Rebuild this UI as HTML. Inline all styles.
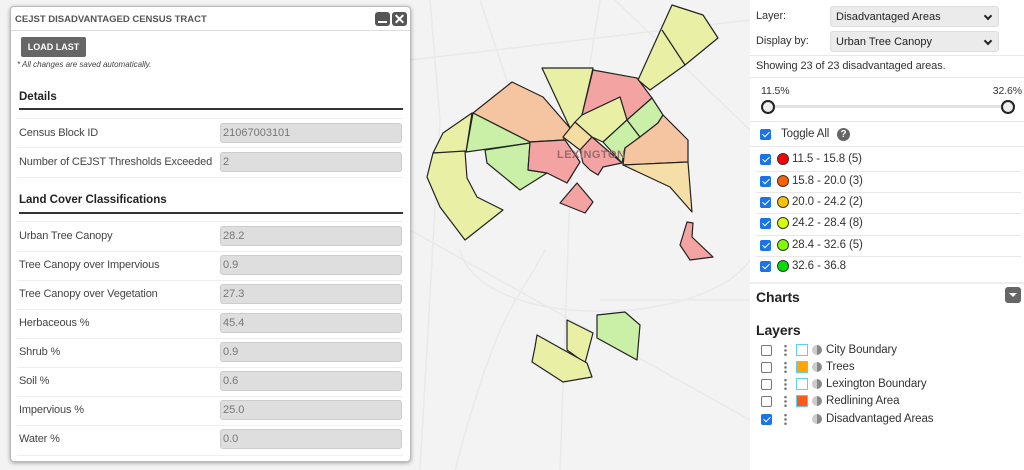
<!DOCTYPE html>
<html><head><meta charset="utf-8"><style>
*{box-sizing:border-box;margin:0;padding:0}
body{width:1024px;height:470px;overflow:hidden;font-family:"Liberation Sans",sans-serif;background:#f3f3f3;position:relative;color:#333}
.a{position:absolute}
#panel{left:10px;top:6px;width:401px;height:456px;background:#fff;border:1px solid #bbb;border-radius:4px;box-shadow:0 1px 4px rgba(0,0,0,.35)}
.lbl{position:absolute;left:8px;font-size:11px;letter-spacing:-0.15px;color:#444}
.inp{position:absolute;left:209px;width:182px;height:20px;background:#dedede;border:1px solid #ccc;border-radius:3px;font-size:11px;color:#777;padding:3px 0 0 2px}
.sep{position:absolute;left:6px;width:386px;height:1px;background:#eee}
.h{position:absolute;left:8px;font-size:11.5px;font-weight:bold;color:#222}
.hl{position:absolute;left:8px;width:384px;height:2px;background:#333}
#rp{left:750px;top:0;width:274px;height:470px;background:#fff}
.cb{position:absolute;width:11px;height:11px;background:#1a73e8;border-radius:2px}
.cb::after{content:"";position:absolute;left:3.5px;top:1px;width:3px;height:6px;border:solid #fff;border-width:0 1.6px 1.6px 0;transform:rotate(45deg)}
.cbe{position:absolute;width:11px;height:11px;border:1px solid #777;border-radius:2px;background:#fff}
.dot{position:absolute;width:12px;height:12px;border-radius:50%;border:1px solid #333}
.lt{position:absolute;font-size:11.5px;letter-spacing:-0.1px;color:#333}
.rl{position:absolute;left:0;width:274px;height:1px;background:#e8e8e8}
.sel{position:absolute;left:80px;width:169px;height:21px;background:#ebebeb;border:1px solid #ddd;border-radius:3px;font-size:11px;padding:4px 0 0 5px;color:#222}
.sel::after{content:"";position:absolute;right:7px;top:6px;width:4px;height:4px;border:solid #222;border-width:0 2px 2px 0;transform:rotate(45deg)}
.dots{position:absolute;width:3px;height:13px;background:radial-gradient(circle,#777 1.2px,transparent 1.4px) 0 0/3px 4.3px}
.half{position:absolute;width:10px;height:10px;border-radius:50%;background:linear-gradient(90deg,#ccc 50%,#888 50%)}
</style></head><body>
<svg class="a" style="left:0;top:0" width="750" height="470">
<g fill="none" stroke="#e9e9e9" stroke-width="1.5">
<path d="M430 0 L440 120 L420 470"/><path d="M560 470 L570 190 L600 0"/><path d="M410 230 L750 420"/><path d="M455 470 C500 300 520 300 545 250"/>
<path d="M410 60 L750 20"/><path d="M615 0 L750 130"/><path d="M460 250 C480 330 700 330 750 260"/><path d="M600 300 L750 300"/><path d="M480 0 L520 120"/>
</g>
<g stroke="#222" stroke-width="1.2" stroke-linejoin="round">
<path fill="#e9f0a6" d="M672 5 L703 15 L718 38 L685 65 L650 90 L638 80 Z"/>
<path fill="none" d="M662 30 L685 65"/>
<path fill="#e9f0a6" d="M542 68 L593 68 L582 115 L570 128 Z"/>
<path fill="#f4a3a3" d="M593 70 L637 78 L652 98 L627 120 L620 97 L582 115 Z"/>
<path fill="#f5c4a0" d="M473 113 L512 82 L543 97 L570 128 L563 140 L530 142 Z"/>
<path fill="#c9f0a6" d="M473 113 L530 142 L530 143 L466 152 Z"/>
<path fill="#e9f0a6" d="M472 113 L443 133 L433 153 L466 152 Z"/>
<path fill="#e9f0a6" d="M433 153 L427 177 L440 207 L465 240 L503 210 L477 197 L467 178 L465 151 Z"/>
<path fill="#c9f0a6" d="M485 150 L530 143 L528 170 L547 173 L520 190 L487 163 Z"/>
<path fill="#f4a3a3" d="M530 142 L565 140 L580 162 L567 183 L547 173 L528 170 Z"/>
<path fill="#f5dca0" d="M563 137 L575 122 L592 137 L580 150 Z"/>
<path fill="#f4a3a3" d="M580 150 L592 137 L622 163 L603 167 L598 175 L590 170 L583 163 Z"/>
<path fill="#e9f0a6" d="M582 115 L620 97 L627 120 L603 142 L592 137 L575 122 Z"/>
<path fill="#c9f0a6" d="M603 142 L627 120 L640 137 L625 148 L622 163 Z"/>
<path fill="#c9f0a6" d="M627 120 L652 98 L663 115 L658 123 L640 137 Z"/>
<path fill="#f5c4a0" d="M640 137 L658 123 L663 115 L688 140 L688 162 L623 165 L625 148 Z"/>
<path fill="#f6dfa6" d="M623 165 L688 162 L692 212 L670 187 Z"/>
<path fill="#f4a3a3" d="M577 183 L593 202 L585 213 L560 203 Z"/>
<path fill="#f4a3a3" d="M687 222 L693 223 L692 237 L713 257 L690 260 L680 245 Z"/>
<path fill="#c9f0a6" d="M597 315 L625 312 L640 325 L637 360 L597 338 Z"/>
<path fill="#e9f0a6" d="M567 320 L593 333 L585 363 L567 350 Z"/>
<path fill="#e9f0a6" d="M537 335 L587 363 L592 377 L563 382 L532 362 L535 347 Z"/>
</g>
<text x="557" y="158" font-family="Liberation Sans" font-size="11" font-weight="bold" fill="#9a6a6a" letter-spacing="0.5">LEXINGTON</text>
</svg>

<div id="panel" class="a">
<div class="a" style="left:0;top:0;width:399px;height:24px;border-bottom:1px solid #ddd;font-size:9.5px;font-weight:bold;color:#555;padding:7px 0 0 4px">CEJST DISADVANTAGED CENSUS TRACT</div>
<div class="a" style="left:364px;top:5px;width:15px;height:14px;background:#555;border-radius:3px"><div class="a" style="left:3px;top:9px;width:9px;height:2px;background:#fff"></div></div>
<div class="a" style="left:381px;top:5px;width:15px;height:14px;background:#555;border-radius:3px;color:#fff;font-size:14px;font-weight:bold;line-height:14px;text-align:center">✕</div>
<div class="a" style="left:10px;top:30px;width:65px;height:20px;background:#666;border-radius:2px;color:#fff;font-size:9px;font-weight:bold;text-align:center;line-height:20px">LOAD LAST</div>
<div class="a" style="left:6px;top:53px;font-size:8px;font-style:italic;color:#444">* All changes are saved automatically.</div>
<div class="h" style="top:84px">Details</div><div class="hl" style="top:101px"></div>
<div class="sep" style="top:111px"></div>
<div class="lbl" style="top:120px">Census Block ID</div><div class="inp" style="top:116px">21067003101</div>
<div class="sep" style="top:140px"></div>
<div class="lbl" style="top:149px">Number of CEJST Thresholds Exceeded</div><div class="inp" style="top:145px">2</div>
<div class="sep" style="top:170px"></div>
<div class="h" style="top:187px">Land Cover Classifications</div><div class="hl" style="top:205px"></div>
<div class="sep" style="top:214px"></div>
<div class="lbl" style="top:223px">Urban Tree Canopy</div><div class="inp" style="top:219px">28.2</div>
<div class="sep" style="top:244px"></div>
<div class="lbl" style="top:252px">Tree Canopy over Impervious</div><div class="inp" style="top:248px">0.9</div>
<div class="sep" style="top:273px"></div>
<div class="lbl" style="top:281px">Tree Canopy over Vegetation</div><div class="inp" style="top:277px">27.3</div>
<div class="sep" style="top:302px"></div>
<div class="lbl" style="top:310px">Herbaceous %</div><div class="inp" style="top:306px">45.4</div>
<div class="sep" style="top:331px"></div>
<div class="lbl" style="top:339px">Shrub %</div><div class="inp" style="top:335px">0.9</div>
<div class="sep" style="top:360px"></div>
<div class="lbl" style="top:368px">Soil %</div><div class="inp" style="top:364px">0.6</div>
<div class="sep" style="top:389px"></div>
<div class="lbl" style="top:397px">Impervious %</div><div class="inp" style="top:393px">25.0</div>
<div class="sep" style="top:418px"></div>
<div class="lbl" style="top:426px">Water %</div><div class="inp" style="top:422px">0.0</div>
<div class="sep" style="top:448px"></div>
</div>

<div id="rp" class="a">
<div class="lt" style="left:6px;top:10px;font-size:11px">Layer:</div>
<div class="sel" style="top:6px">Disadvantaged Areas</div>
<div class="lt" style="left:6px;top:35px;font-size:11px">Display by:</div>
<div class="sel" style="top:31px">Urban Tree Canopy</div>
<div class="rl" style="top:55px"></div>
<div class="lt" style="left:6px;top:60px;font-size:11px">Showing 23 of 23 disadvantaged areas.</div>
<div class="rl" style="top:77px"></div>
<div class="lt" style="left:11px;top:85px;font-size:10.5px">11.5%</div>
<div class="lt" style="right:2px;top:85px;font-size:10.5px">32.6%</div>
<div class="a" style="left:18px;top:105px;width:240px;height:3px;background:#e2e2e2"></div>
<div class="a" style="left:11px;top:100px;width:14px;height:14px;border-radius:50%;border:2px solid #222;background:#eee"></div>
<div class="a" style="left:251px;top:100px;width:14px;height:14px;border-radius:50%;border:2px solid #222;background:#eee"></div>
<div class="rl" style="top:121px"></div>
<div class="cb" style="left:10px;top:129px"></div>
<div class="lt" style="left:31px;top:128px">Toggle All</div>
<div class="a" style="left:87px;top:128px;width:13px;height:13px;border-radius:50%;background:#666;color:#fff;font-size:10px;font-weight:bold;text-align:center;line-height:13px">?</div>
<div class="rl" style="top:146px"></div>
<div class="cb" style="left:10px;top:154px"></div><div class="dot" style="left:27px;top:153px;background:#f00"></div><div class="lt" style="left:42px;top:153px">11.5 - 15.8 (5)</div>
<div class="rl" style="top:171px;left:6px;width:265px"></div>
<div class="cb" style="left:10px;top:176px"></div><div class="dot" style="left:27px;top:175px;background:#ff6000"></div><div class="lt" style="left:42px;top:175px">15.8 - 20.0 (3)</div>
<div class="rl" style="top:192px;left:6px;width:265px"></div>
<div class="cb" style="left:10px;top:197px"></div><div class="dot" style="left:27px;top:196px;background:#ffc000"></div><div class="lt" style="left:42px;top:196px">20.0 - 24.2 (2)</div>
<div class="rl" style="top:213px;left:6px;width:265px"></div>
<div class="cb" style="left:10px;top:218px"></div><div class="dot" style="left:27px;top:217px;background:#d8ff00"></div><div class="lt" style="left:42px;top:217px">24.2 - 28.4 (8)</div>
<div class="rl" style="top:235px;left:6px;width:265px"></div>
<div class="cb" style="left:10px;top:240px"></div><div class="dot" style="left:27px;top:239px;background:#80ff00"></div><div class="lt" style="left:42px;top:239px">28.4 - 32.6 (5)</div>
<div class="rl" style="top:256px;left:6px;width:265px"></div>
<div class="cb" style="left:10px;top:261px"></div><div class="dot" style="left:27px;top:260px;background:#00e000"></div><div class="lt" style="left:42px;top:260px">32.6 - 36.8</div>
<div class="rl" style="top:282px;height:2px;background:#eee"></div>
<div class="lt" style="left:6px;top:289px;font-size:14px;font-weight:bold;color:#222">Charts</div>
<div class="a" style="left:255px;top:287px;width:16px;height:16px;background:#666;border-radius:3px"><div class="a" style="left:4px;top:6px;border-left:4px solid transparent;border-right:4px solid transparent;border-top:4px solid #fff"></div></div>
<div class="lt" style="left:6px;top:322px;font-size:14px;font-weight:bold;color:#222">Layers</div>
<div class="cbe" style="left:11px;top:345px"></div><div class="dots" style="left:34px;top:344px"></div><div class="a" style="left:46px;top:344px;width:12px;height:12px;border:1px solid #5cd0f0;background:#fff"></div><div class="half" style="left:62px;top:345px"></div><div class="lt" style="left:76px;top:344px">City Boundary</div>
<div class="cbe" style="left:11px;top:362px"></div><div class="dots" style="left:34px;top:361px"></div><div class="a" style="left:46px;top:361px;width:12px;height:12px;border:1px solid #5cd0f0;background:#ffa500"></div><div class="half" style="left:62px;top:362px"></div><div class="lt" style="left:76px;top:361px">Trees</div>
<div class="cbe" style="left:11px;top:379px"></div><div class="dots" style="left:34px;top:378px"></div><div class="a" style="left:46px;top:378px;width:12px;height:12px;border:1px solid #5cd0f0;background:#fff"></div><div class="half" style="left:62px;top:379px"></div><div class="lt" style="left:76px;top:378px">Lexington Boundary</div>
<div class="cbe" style="left:11px;top:396px"></div><div class="dots" style="left:34px;top:395px"></div><div class="a" style="left:46px;top:395px;width:12px;height:12px;border:1px solid #5cd0f0;background:#ff5a1a"></div><div class="half" style="left:62px;top:396px"></div><div class="lt" style="left:76px;top:395px">Redlining Area</div>
<div class="cb" style="left:11px;top:414px"></div><div class="dots" style="left:34px;top:413px"></div><div class="half" style="left:62px;top:414px"></div><div class="lt" style="left:76px;top:413px">Disadvantaged Areas</div>
</div>
</body></html>
